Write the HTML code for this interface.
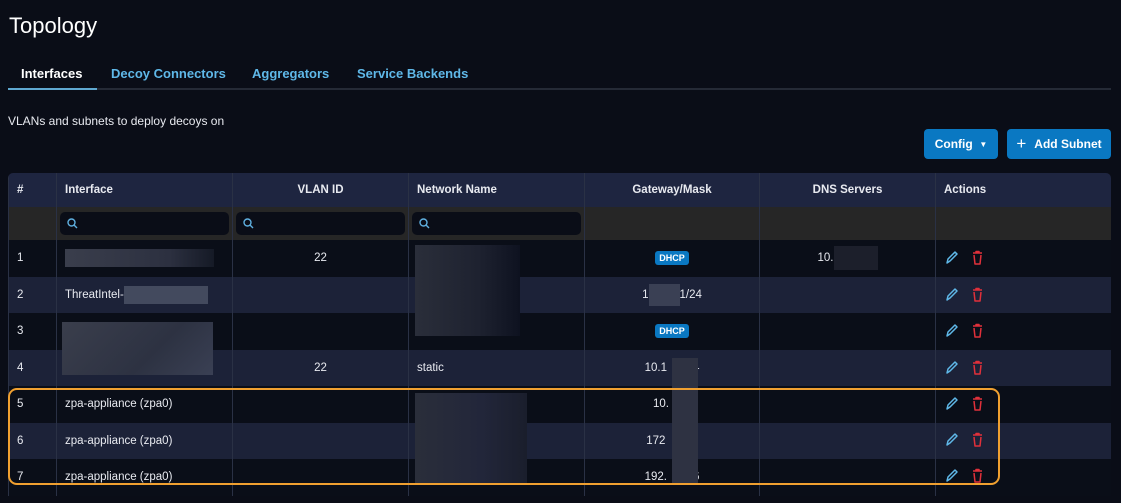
<!DOCTYPE html>
<html><head><style>
*{margin:0;padding:0;box-sizing:border-box}
body{width:1121px;height:492px;background:#0a0d17;font-family:"Liberation Sans",sans-serif;color:#e8eaf0;position:relative;overflow:hidden}
.a{position:absolute}
h1{position:absolute;left:9px;top:13px;font-size:22px;font-weight:normal;color:#fff}
.tab{position:absolute;top:66px;font-size:13px;font-weight:bold;color:#5fb8e8}
.btn{position:absolute;top:129px;height:30px;background:#0a78c2;border-radius:4px;color:#fff;font-size:12px;font-weight:bold;display:flex;align-items:center;justify-content:center}
.wrap{position:absolute;left:8px;top:173px;width:1103px;height:330px;border-radius:5px;overflow:hidden}
table{width:1103px;border-collapse:collapse;font-size:11.5px;table-layout:fixed}
td,th{border-left:1px solid #2a3145;padding:0 8px;white-space:nowrap;overflow:hidden}
th{background:#1e2540;height:34px;text-align:left;font-weight:bold}
tr.f td{background:#262626;height:33px;padding:0 3px}
tr.o td{background:#0a0e18;height:36.5px}
tr.e td{background:#1c2238;height:36.5px}
.c{text-align:center}
.s{height:23px;background:#0a0d17;border-radius:5px;position:relative}
.s svg{position:absolute;left:7px;top:6px}
.bl{display:inline-block;vertical-align:middle;background:linear-gradient(90deg,#3a3e4c,#2c3040 70%,#151a26)}
.d{display:inline-block;background:#0a78c2;color:#fff;font-size:9px;font-weight:bold;padding:2px 4px;border-radius:3px}
td:last-child{font-size:0}
</style></head><body>
<h1>Topology</h1>
<div class="tab" style="left:21px;color:#fff">Interfaces</div>
<div class="tab" style="left:111px">Decoy Connectors</div>
<div class="tab" style="left:252px">Aggregators</div>
<div class="tab" style="left:357px">Service Backends</div>
<div class="a" style="left:8px;top:88px;width:1103px;height:2px;background:#252a36"></div>
<div class="a" style="left:8px;top:88px;width:89px;height:2px;background:#5fa8d0"></div>
<div class="a" style="left:8px;top:114px;font-size:12px">VLANs and subnets to deploy decoys on</div>
<div class="btn" style="left:924px;width:74px">Config&nbsp;&nbsp;<span style="font-size:8px">▼</span></div>
<div class="btn" style="left:1007px;width:104px"><span style="font-size:17px;font-weight:normal;margin-right:8px">+</span>Add Subnet</div>
<div class="wrap"><table>
<colgroup><col style="width:48px"><col style="width:176px"><col style="width:176px"><col style="width:176px"><col style="width:175px"><col style="width:176px"><col style="width:176px"></colgroup>
<tr><th>#</th><th>Interface</th><th class="c">VLAN ID</th><th>Network Name</th><th class="c">Gateway/Mask</th><th class="c">DNS Servers</th><th>Actions</th></tr>
<tr class="f"><td></td>
<td><div class="s"><svg width="11" height="11" viewBox="0 0 11 11"><circle cx="4.5" cy="4.5" r="3.5" fill="none" stroke="#5fb0e0" stroke-width="1.4"/><path d="M7 7L10 10" stroke="#5fb0e0" stroke-width="1.4"/></svg></div></td>
<td><div class="s"><svg width="11" height="11" viewBox="0 0 11 11"><circle cx="4.5" cy="4.5" r="3.5" fill="none" stroke="#5fb0e0" stroke-width="1.4"/><path d="M7 7L10 10" stroke="#5fb0e0" stroke-width="1.4"/></svg></div></td>
<td><div class="s"><svg width="11" height="11" viewBox="0 0 11 11"><circle cx="4.5" cy="4.5" r="3.5" fill="none" stroke="#5fb0e0" stroke-width="1.4"/><path d="M7 7L10 10" stroke="#5fb0e0" stroke-width="1.4"/></svg></div></td>
<td></td><td></td><td></td></tr>
<tr class="o"><td>1</td><td><span class="bl" style="width:149px;height:18px"></span></td><td class="c">22</td><td></td><td class="c"><span class="d">DHCP</span></td><td class="c">10.<span class="bl" style="width:44px;height:24px;background:#1c1f2b"></span></td><td>ACT</td></tr>
<tr class="e"><td>2</td><td>ThreatIntel-<span class="bl" style="width:84px;height:18px;background:#434a5e"></span></td><td></td><td></td><td class="c">1<span class="bl" style="width:31px;height:22px;background:#3a4054"></span>1/24</td><td></td><td>ACT</td></tr>
<tr class="o"><td>3</td><td></td><td></td><td></td><td class="c"><span class="d">DHCP</span></td><td></td><td>ACT</td></tr>
<tr class="e"><td>4</td><td></td><td class="c">22</td><td>static</td><td class="c">10.1<span style="display:inline-block;width:26px"></span>4</td><td></td><td>ACT</td></tr>
<tr class="o"><td>5</td><td>zpa-appliance (zpa0)</td><td></td><td></td><td class="c">10.<span style="display:inline-block;width:22px"></span></td><td></td><td>ACT</td></tr>
<tr class="e"><td>6</td><td>zpa-appliance (zpa0)</td><td></td><td></td><td class="c">172<span style="display:inline-block;width:26px"></span>2</td><td></td><td>ACT</td></tr>
<tr class="o"><td>7</td><td>zpa-appliance (zpa0)</td><td></td><td></td><td class="c">192.<span style="display:inline-block;width:26px"></span>6</td><td></td><td>ACT</td></tr>
</table></div>
<div class="a" style="left:62px;top:322px;width:151px;height:53px;background:linear-gradient(135deg,#3a3e4c,#2d3242 60%,#3a4054)"></div>
<div class="a" style="left:415px;top:245px;width:105px;height:91px;background:linear-gradient(90deg,#2a2e3a,#1e2230 60%,#0e1220)"></div>
<div class="a" style="left:415px;top:393px;width:112px;height:91px;background:linear-gradient(90deg,#2a2e3a,#22263a 60%,#1a1e2c)"></div>
<div class="a" style="left:672px;top:358px;width:26px;height:125px;background:#2e3242"></div>
<div class="a" style="left:8px;top:388px;width:992px;height:97px;border:2px solid #f0a030;border-radius:9px"></div>
<svg class="a" style="left:944px;top:245px" width="45" height="240" viewBox="0 0 45 240">
<defs><g id="ac"><path d="M3 13L4 9L11 2L13 4L6 11Z M3 13L6 11" fill="none" stroke="#5fb8e8" stroke-width="1.5" stroke-linejoin="round"/><path d="M29 3H38M32 3V1.5H35V3M30 5L31 14H36L37 5" fill="none" stroke="#e0303a" stroke-width="1.5" stroke-linejoin="round"/></g></defs>
<use href="#ac" y="5"/><use href="#ac" y="42"/><use href="#ac" y="78"/><use href="#ac" y="115"/><use href="#ac" y="151"/><use href="#ac" y="187"/><use href="#ac" y="223"/>
</svg>
</body></html>
